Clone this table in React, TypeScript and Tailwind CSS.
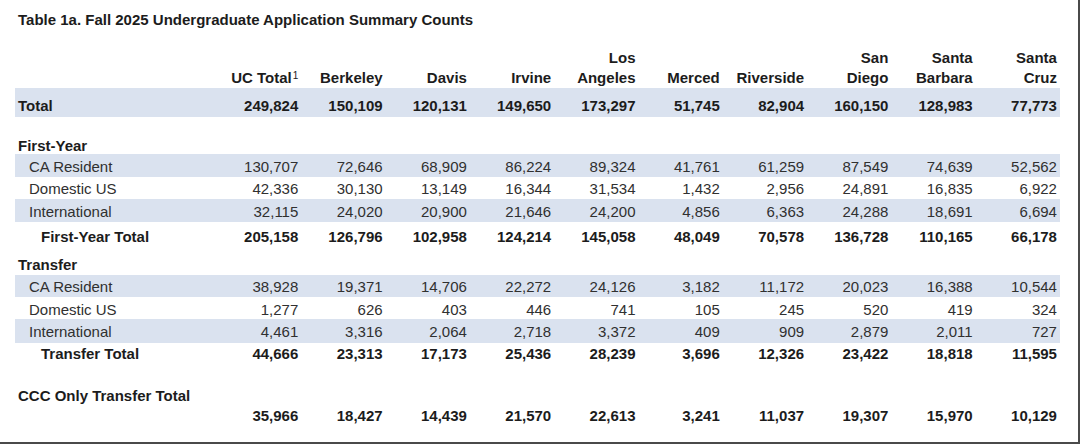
const cols = ['UC Total', 'Berkeley', 'Davis', 'Irvine', 'Los Angeles', 'Merced', 'Riverside', 'San Diego', 'Santa Barbara', 'Santa Cruz']

type Row = {
  label: string
  values?: string[]
  kind: 'total' | 'section' | 'item' | 'subtotal'
  band?: boolean
  h: string
  pt: string
}

const rows: Row[] = [
  { label: 'Total', kind: 'total', band: true, h: 'h-[29px]', pt: 'pt-[8px]', values: ['249,824', '150,109', '120,131', '149,650', '173,297', '51,745', '82,904', '160,150', '128,983', '77,773'] },
  { label: 'First-Year', kind: 'section', h: 'h-[37px]', pt: 'pt-[19px]' },
  { label: 'CA Resident', kind: 'item', band: true, h: 'h-[23px]', pt: 'pt-[3px]', values: ['130,707', '72,646', '68,909', '86,224', '89,324', '41,761', '61,259', '87,549', '74,639', '52,562'] },
  { label: 'Domestic US', kind: 'item', h: 'h-[22px]', pt: 'pt-[2px]', values: ['42,336', '30,130', '13,149', '16,344', '31,534', '1,432', '2,956', '24,891', '16,835', '6,922'] },
  { label: 'International', kind: 'item', band: true, h: 'h-[23px]', pt: 'pt-[3px]', values: ['32,115', '24,020', '20,900', '21,646', '24,200', '4,856', '6,363', '24,288', '18,691', '6,694'] },
  { label: 'First-Year Total', kind: 'subtotal', h: 'h-[28px]', pt: 'pt-[5px]', values: ['205,158', '126,796', '102,958', '124,214', '145,058', '48,049', '70,578', '136,728', '110,165', '66,178'] },
  { label: 'Transfer', kind: 'section', h: 'h-[25px]', pt: 'pt-[5px]' },
  { label: 'CA Resident', kind: 'item', band: true, h: 'h-[22px]', pt: 'pt-[2px]', values: ['38,928', '19,371', '14,706', '22,272', '24,126', '3,182', '11,172', '20,023', '16,388', '10,544'] },
  { label: 'Domestic US', kind: 'item', h: 'h-[22px]', pt: 'pt-[3px]', values: ['1,277', '626', '403', '446', '741', '105', '245', '520', '419', '324'] },
  { label: 'International', kind: 'item', band: true, h: 'h-[24px]', pt: 'pt-[3px]', values: ['4,461', '3,316', '2,064', '2,718', '3,372', '409', '909', '2,879', '2,011', '727'] },
  { label: 'Transfer Total', kind: 'subtotal', h: 'h-[22px]', pt: 'pt-[1px]', values: ['44,666', '23,313', '17,173', '25,436', '28,239', '3,696', '12,326', '23,422', '18,818', '11,595'] },
]

const ccc = ['35,966', '18,427', '14,439', '21,570', '22,613', '3,241', '11,037', '19,307', '15,970', '10,129']

const grid = 'grid grid-cols-[202px_repeat(10,84.3px)] mx-[15px] w-[1045px]'

function labelClass(kind: Row['kind']) {
  if (kind === 'item') return 'pl-[14px] font-normal text-[#303030]'
  if (kind === 'subtotal') return 'pl-[26px] font-bold'
  return 'pl-[3px] font-bold'
}

export default function App() {
  return (
    <div
      className="w-[1080px] h-[444px] bg-white border-r-2 border-b-2 border-[#4a4a4a] text-[#1c1c1c] overflow-hidden"
      style={{ fontFamily: '"Liberation Sans", Arial, sans-serif' }}
    >
      <div className="h-[40px] pl-[18px] flex items-center text-[15px] font-bold">
        Table 1a. Fall 2025 Undergraduate Application Summary Counts
      </div>

      {/*---header----*/}
      <div className={`${grid} h-[48px] pt-[7px] text-[15px] leading-[20px] font-bold`}>
        <div />
        {cols.map((c, i) => {
          const parts = c.split(' ')
          return (
            <div key={c} className="pr-[3px] text-right flex flex-col justify-end">
              {i === 0 ? (
                <span>
                  UC Total<span className="text-[10px] align-top relative -top-[2px] font-normal ml-[1px]">1</span>
                </span>
              ) : parts.length === 2 ? (
                <>
                  <span>{parts[0]}</span>
                  <span>{parts[1]}</span>
                </>
              ) : (
                <span>{c}</span>
              )}
            </div>
          )
        })}
      </div>

      {rows.map((r, idx) => (
        <div
          key={idx}
          className={`${grid} ${r.h} ${r.pt} text-[15px] leading-[20px] ${r.band ? 'bg-[#dae2ef]' : ''}`}
        >
          <div className={labelClass(r.kind)}>{r.label}</div>
          {r.values
            ? r.values.map((v, i) => (
                <div
                  key={i}
                  className={`pr-[3px] text-right ${r.kind === 'item' ? 'font-normal text-[#303030]' : 'font-bold'}`}
                >
                  {v}
                </div>
              ))
            : null}
        </div>
      ))}

      {/*---CCC----*/}
      <div className={`${grid} h-[41px] pt-[21px] text-[15px] leading-[20px] font-bold`}>
        <div className="pl-[3px] col-span-3 whitespace-nowrap">CCC Only Transfer Total</div>
      </div>
      <div className={`${grid} h-[20px] text-[15px] leading-[20px] font-bold`}>
        <div />
        {ccc.map((v, i) => (
          <div key={i} className="pr-[3px] text-right">
            {v}
          </div>
        ))}
      </div>
    </div>
  )
}
